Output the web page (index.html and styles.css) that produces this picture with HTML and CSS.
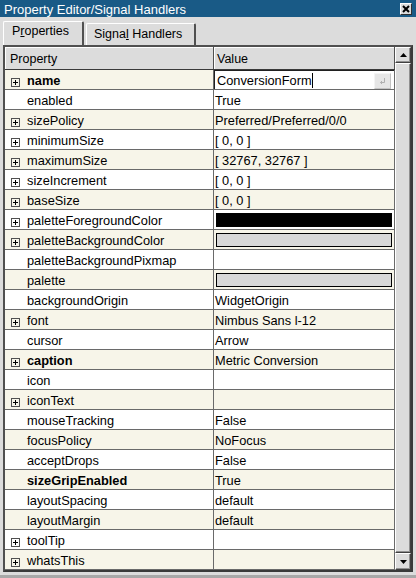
FILE: index.html
```html
<!DOCTYPE html>
<html>
<head>
<meta charset="utf-8">
<link rel="stylesheet" href="styles.css">
</head>
<body>
<div class="window">
  <div class="titlebar">
    <span class="title">Property Editor/Signal Handlers</span>
    <span class="close"><svg width="10" height="10" viewBox="0 0 10 10"><path d="M2 2 L8 8 M8 2 L2 8" stroke="#000" stroke-width="2"/></svg></span>
  </div>
  <div class="tabs">
    <div class="tab active">P<u>r</u>operties</div>
    <div class="tab">Signa<u>l</u> Handlers</div>
  </div>
  <div class="frame">
    <div class="table">
      <div class="row head">
        <div class="cell hcell">Property</div>
        <div class="cell hcell">Value</div>
      </div>
      <div class="row alt">
        <div class="cell prop"><span class="exp"><svg width="9" height="9" viewBox="0 0 9 9"><rect x="0.5" y="0.5" width="8" height="8" fill="none" stroke="#505050"/><path d="M2 4.5 H7 M4.5 2 V7" stroke="#000"/></svg></span><b>name</b></div>
        <div class="cell val editcell"><div class="edit"><span class="edittext">ConversionForm</span><span class="caret"></span><span class="editbtn"><svg width="9" height="9" viewBox="0 0 9 9"><path d="M6.5 1 V5.5 H2.5 M4 4 L2.5 5.5 L4 7" stroke="#b0b0b0" fill="none"/></svg></span></div></div>
      </div>
      <div class="row">
        <div class="cell prop"><span class="noexp"></span>enabled</div>
        <div class="cell val">True</div>
      </div>
      <div class="row alt">
        <div class="cell prop"><span class="exp"><svg width="9" height="9" viewBox="0 0 9 9"><rect x="0.5" y="0.5" width="8" height="8" fill="none" stroke="#505050"/><path d="M2 4.5 H7 M4.5 2 V7" stroke="#000"/></svg></span>sizePolicy</div>
        <div class="cell val">Preferred/Preferred/0/0</div>
      </div>
      <div class="row">
        <div class="cell prop"><span class="exp"><svg width="9" height="9" viewBox="0 0 9 9"><rect x="0.5" y="0.5" width="8" height="8" fill="none" stroke="#505050"/><path d="M2 4.5 H7 M4.5 2 V7" stroke="#000"/></svg></span>minimumSize</div>
        <div class="cell val">[ 0, 0 ]</div>
      </div>
      <div class="row alt">
        <div class="cell prop"><span class="exp"><svg width="9" height="9" viewBox="0 0 9 9"><rect x="0.5" y="0.5" width="8" height="8" fill="none" stroke="#505050"/><path d="M2 4.5 H7 M4.5 2 V7" stroke="#000"/></svg></span>maximumSize</div>
        <div class="cell val">[ 32767, 32767 ]</div>
      </div>
      <div class="row">
        <div class="cell prop"><span class="exp"><svg width="9" height="9" viewBox="0 0 9 9"><rect x="0.5" y="0.5" width="8" height="8" fill="none" stroke="#505050"/><path d="M2 4.5 H7 M4.5 2 V7" stroke="#000"/></svg></span>sizeIncrement</div>
        <div class="cell val">[ 0, 0 ]</div>
      </div>
      <div class="row alt">
        <div class="cell prop"><span class="exp"><svg width="9" height="9" viewBox="0 0 9 9"><rect x="0.5" y="0.5" width="8" height="8" fill="none" stroke="#505050"/><path d="M2 4.5 H7 M4.5 2 V7" stroke="#000"/></svg></span>baseSize</div>
        <div class="cell val">[ 0, 0 ]</div>
      </div>
      <div class="row">
        <div class="cell prop"><span class="exp"><svg width="9" height="9" viewBox="0 0 9 9"><rect x="0.5" y="0.5" width="8" height="8" fill="none" stroke="#505050"/><path d="M2 4.5 H7 M4.5 2 V7" stroke="#000"/></svg></span>paletteForegroundColor</div>
        <div class="cell val swcell"><div class="swatch black"></div></div>
      </div>
      <div class="row alt">
        <div class="cell prop"><span class="exp"><svg width="9" height="9" viewBox="0 0 9 9"><rect x="0.5" y="0.5" width="8" height="8" fill="none" stroke="#505050"/><path d="M2 4.5 H7 M4.5 2 V7" stroke="#000"/></svg></span>paletteBackgroundColor</div>
        <div class="cell val swcell"><div class="swatch grey"></div></div>
      </div>
      <div class="row">
        <div class="cell prop"><span class="noexp"></span>paletteBackgroundPixmap</div>
        <div class="cell val"></div>
      </div>
      <div class="row alt">
        <div class="cell prop"><span class="noexp"></span>palette</div>
        <div class="cell val swcell"><div class="swatch grey"></div></div>
      </div>
      <div class="row">
        <div class="cell prop"><span class="noexp"></span>backgroundOrigin</div>
        <div class="cell val">WidgetOrigin</div>
      </div>
      <div class="row alt">
        <div class="cell prop"><span class="exp"><svg width="9" height="9" viewBox="0 0 9 9"><rect x="0.5" y="0.5" width="8" height="8" fill="none" stroke="#505050"/><path d="M2 4.5 H7 M4.5 2 V7" stroke="#000"/></svg></span>font</div>
        <div class="cell val">Nimbus Sans l-12</div>
      </div>
      <div class="row">
        <div class="cell prop"><span class="noexp"></span>cursor</div>
        <div class="cell val">Arrow</div>
      </div>
      <div class="row alt">
        <div class="cell prop"><span class="exp"><svg width="9" height="9" viewBox="0 0 9 9"><rect x="0.5" y="0.5" width="8" height="8" fill="none" stroke="#505050"/><path d="M2 4.5 H7 M4.5 2 V7" stroke="#000"/></svg></span><b>caption</b></div>
        <div class="cell val">Metric Conversion</div>
      </div>
      <div class="row">
        <div class="cell prop"><span class="noexp"></span>icon</div>
        <div class="cell val"></div>
      </div>
      <div class="row alt">
        <div class="cell prop"><span class="exp"><svg width="9" height="9" viewBox="0 0 9 9"><rect x="0.5" y="0.5" width="8" height="8" fill="none" stroke="#505050"/><path d="M2 4.5 H7 M4.5 2 V7" stroke="#000"/></svg></span>iconText</div>
        <div class="cell val"></div>
      </div>
      <div class="row">
        <div class="cell prop"><span class="noexp"></span>mouseTracking</div>
        <div class="cell val">False</div>
      </div>
      <div class="row alt">
        <div class="cell prop"><span class="noexp"></span>focusPolicy</div>
        <div class="cell val">NoFocus</div>
      </div>
      <div class="row">
        <div class="cell prop"><span class="noexp"></span>acceptDrops</div>
        <div class="cell val">False</div>
      </div>
      <div class="row alt">
        <div class="cell prop"><span class="noexp"></span><b>sizeGripEnabled</b></div>
        <div class="cell val">True</div>
      </div>
      <div class="row">
        <div class="cell prop"><span class="noexp"></span>layoutSpacing</div>
        <div class="cell val">default</div>
      </div>
      <div class="row alt">
        <div class="cell prop"><span class="noexp"></span>layoutMargin</div>
        <div class="cell val">default</div>
      </div>
      <div class="row">
        <div class="cell prop"><span class="exp"><svg width="9" height="9" viewBox="0 0 9 9"><rect x="0.5" y="0.5" width="8" height="8" fill="none" stroke="#505050"/><path d="M2 4.5 H7 M4.5 2 V7" stroke="#000"/></svg></span>toolTip</div>
        <div class="cell val"></div>
      </div>
      <div class="row alt">
        <div class="cell prop"><span class="exp"><svg width="9" height="9" viewBox="0 0 9 9"><rect x="0.5" y="0.5" width="8" height="8" fill="none" stroke="#505050"/><path d="M2 4.5 H7 M4.5 2 V7" stroke="#000"/></svg></span>whatsThis</div>
        <div class="cell val"></div>
      </div>
    </div>
    <div class="scrollbar">
      <div class="sbtn"><svg width="7" height="4" viewBox="0 0 7 4"><path d="M3.5 0 L7 4 L0 4 Z" fill="#000"/></svg></div>
      <div class="slider"></div>
      <div class="sbtn"><svg width="7" height="4" viewBox="0 0 7 4"><path d="M0 0 L7 0 L3.5 4 Z" fill="#000"/></svg></div>
    </div>
  </div>
  <div class="footer"></div>
</div>
</body>
</html>
```

FILE: styles.css
```css
html, body {
  margin: 0;
  padding: 0;
}
body {
  width: 416px;
  height: 578px;
  overflow: hidden;
  background: #dcdcdc;
  font-family: "Liberation Sans", Arial, sans-serif;
  font-size: 12.5px;
  color: #000;
}
.window {
  display: flex;
  flex-direction: column;
}
.titlebar {
  height: 17px;
  background: #195a86;
  color: #fff;
  font-size: 13px;
  display: flex;
  align-items: center;
  justify-content: space-between;
  padding: 0 4px 0 4px;
}
.title {
  line-height: 17px;
  padding-top: 1px;
}
.close {
  width: 12px;
  height: 12px;
  box-sizing: border-box;
  background: #dcdcdc;
  border: 1px solid;
  border-color: #ffffff #303030 #303030 #ffffff;
  display: flex;
  align-items: center;
  justify-content: center;
}
.tabs {
  height: 28px;
  display: flex;
  align-items: flex-end;
  padding-left: 3px;
}
.tab {
  box-sizing: border-box;
  border-top: 1px solid #ffffff;
  border-left: 1px solid #ffffff;
  border-right: 2px solid #505050;
  border-top-left-radius: 2px;
  border-top-right-radius: 2px;
  height: 22px;
  width: 110px;
  padding-left: 7px;
  line-height: 20px;
  margin-left: 2px;
}
.tab.active {
  height: 24px;
  width: 81px;
  margin-left: 0;
  padding-left: 8px;
  line-height: 19px;
}
.frame {
  margin-left: 3px;
  width: 410px;
  height: 527px;
  box-sizing: border-box;
  border: 2px solid #3a3a3a;
  border-top-color: #505050;
  border-left-color: #505050;
  display: flex;
}
.table {
  width: 390px;
  display: flex;
  flex-direction: column;
  background: #fff;
  font-size: 12.8px;
}
.row {
  display: grid;
  grid-template-columns: 209px 181px;
  height: 20px;
  box-sizing: border-box;
  border-bottom: 1px solid #6a6a6a;
  background: #ffffff;
}
.row.alt {
  background: #f7f5e9;
}
.row.head {
  height: 23px;
  border-bottom: 1px solid #3a3a3a;
  background: #dcdcdc;
  font-size: 12.5px;
}
.cell {
  box-sizing: border-box;
  border-right: 1px solid #6a6a6a;
  white-space: nowrap;
  overflow: hidden;
  display: flex;
  align-items: flex-start;
}
.hcell {
  padding: 4px 0 0 5px;
  line-height: 16px;
  box-shadow: inset 1px 1px 0 #ffffff;
  border-right: 1px solid #505050;
}
.hcell + .hcell {
  padding-left: 3px;
}
.prop {
  padding: 3px 0 0 0;
  line-height: 16px;
}
.exp {
  width: 9px;
  height: 9px;
  margin: 5px 7px 0 6px;
  display: flex;
  flex: none;
}
.noexp {
  width: 22px;
  flex: none;
}
.val {
  padding: 3px 0 0 1px;
  line-height: 16px;
}
.editcell {
  padding: 0;
}
.edit {
  flex: 1;
  height: 19px;
  box-sizing: border-box;
  background: #fff;
  border-top: 1px solid #202020;
  border-left: 1px solid #202020;
  display: flex;
  align-items: flex-start;
  padding: 2px 3px 0 2px;
  line-height: 16px;
}
.caret {
  width: 1px;
  height: 15px;
  background: #000;
}
.editbtn {
  margin-left: auto;
  width: 17px;
  height: 16px;
  box-sizing: border-box;
  background: #e6e6e6;
  border: 1px solid;
  border-color: #f4f4f4 #c4c4c4 #c4c4c4 #f4f4f4;
  display: flex;
  align-items: center;
  justify-content: center;
}
.swcell {
  padding: 3px 2px 0 2px;
}
.swatch {
  flex: 1;
  height: 14px;
  box-sizing: border-box;
}
.swatch.black {
  background: #000;
}
.swatch.grey {
  background: #d8d8d8;
  border: 1px solid #000;
}
.scrollbar {
  width: 16px;
  display: flex;
  flex-direction: column;
  background: #dcdcdc;
}
.sbtn {
  height: 16px;
  box-sizing: border-box;
  border: 1px solid;
  border-color: #ffffff #404040 #404040 #ffffff;
  box-shadow: inset -1px -1px 0 #909090;
  display: flex;
  align-items: center;
  justify-content: center;
  flex: none;
}
.sbtn:last-child {
  height: 17px;
}
.slider {
  flex: 1;
  box-sizing: border-box;
  border: 1px solid;
  border-color: #ffffff #404040 #404040 #ffffff;
  box-shadow: inset -1px -1px 0 #909090;
}
.footer {
  margin-top: 3px;
  height: 3px;
  background: #a8a8a8;
}
```
